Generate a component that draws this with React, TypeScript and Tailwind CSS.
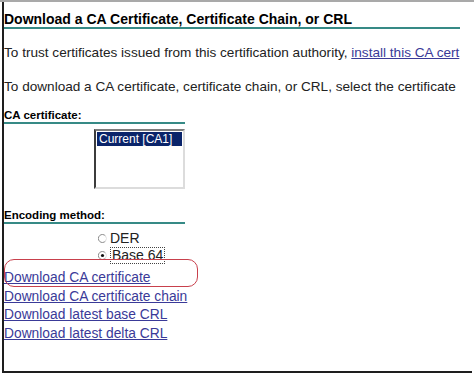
import React from "react";

function Radio({ checked }: { checked?: boolean }) {
  return (
    <svg width="9" height="9" viewBox="0 0 9 9" className="shrink-0">
      <path d="M7.5 2 A4 4 0 1 0 7.5 7" fill="none" stroke="#8a8a8a" strokeWidth="1" />
      <path d="M7.5 2 A4 4 0 0 1 7.5 7" fill="none" stroke="#e0e0e0" strokeWidth="1" />
      {checked && <circle cx="4.5" cy="4.5" r="1.6" fill="#111" />}
    </svg>
  );
}

export default function App() {
  const link = "text-[#3a3a98] underline underline-offset-[1px]";
  return (
    <div className="relative w-[474px] h-[387px] bg-white font-['Liberation_Sans',Arial,sans-serif] text-[#222]">
      <div className="h-[2px] bg-[#a9a9a9]" />
      <div className="ml-[2px] w-[470px] h-[371px] border-l-2 border-b-2 border-[#1e1e1e]">
        <div className="pt-[9px] text-[14px] leading-[16px] font-bold text-black whitespace-nowrap">
          Download a CA Certificate, Certificate Chain, or CRL
        </div>
        <div className="h-[2px] w-[456px] bg-[#368a86]" />
        <p className="mt-[16px] text-[13.6px] leading-[16px] whitespace-nowrap">
          To trust certificates issued from this certification authority,{" "}
          <a className={link}>install this CA cert</a>
        </p>
        <p className="mt-[18px] text-[13.6px] leading-[16px] whitespace-nowrap">
          To download a CA certificate, certificate chain, or CRL, select the certificate
        </p>
        <div className="mt-[14px] text-[11.5px] leading-[13px] font-bold text-black">CA certificate:</div>
        <div className="h-[2px] w-[181px] bg-[#368a86]" />
        <div className="mt-[5px] ml-[90px] w-[91px] h-[60px] border-2 border-t-[#7c7c7c] border-l-[#3c3c3c] border-r-[#dcdcdc] border-b-[#dcdcdc] bg-white pt-[1px] px-[1px]">
          <div className="h-[14px] bg-[#0a246a] text-white text-[12px] leading-[14px] pl-[2px]">Current [CA1]</div>
        </div>
        <div className="mt-[20px] text-[11.5px] leading-[13px] font-bold text-black">Encoding method:</div>
        <div className="h-[2px] w-[181px] bg-[#368a86]" />
        <div className="mt-[5px] ml-[94px] flex flex-col text-[14px] leading-[18px]">
          <div className="flex items-center gap-[3px]">
            <Radio />
            <span>DER</span>
          </div>
          <div className="flex items-center gap-[3px]">
            <Radio checked />
            <span className="border border-dotted border-[#444] px-[1px] leading-[15px]">Base 64</span>
          </div>
        </div>
        <div className="mt-[5px] flex flex-col items-start text-[13.8px] leading-[18.5px]">
          <a className={link}>Download CA certificate</a>
          <a className={link}>Download CA certificate chain</a>
          <a className={link}>Download latest base CRL</a>
          <a className={link}>Download latest delta CRL</a>
        </div>
      </div>
      <div className="absolute left-[4px] top-[259px] w-[194px] h-[28px] rounded-[10px] border border-[#c8404c]" />
    </div>
  );
}
